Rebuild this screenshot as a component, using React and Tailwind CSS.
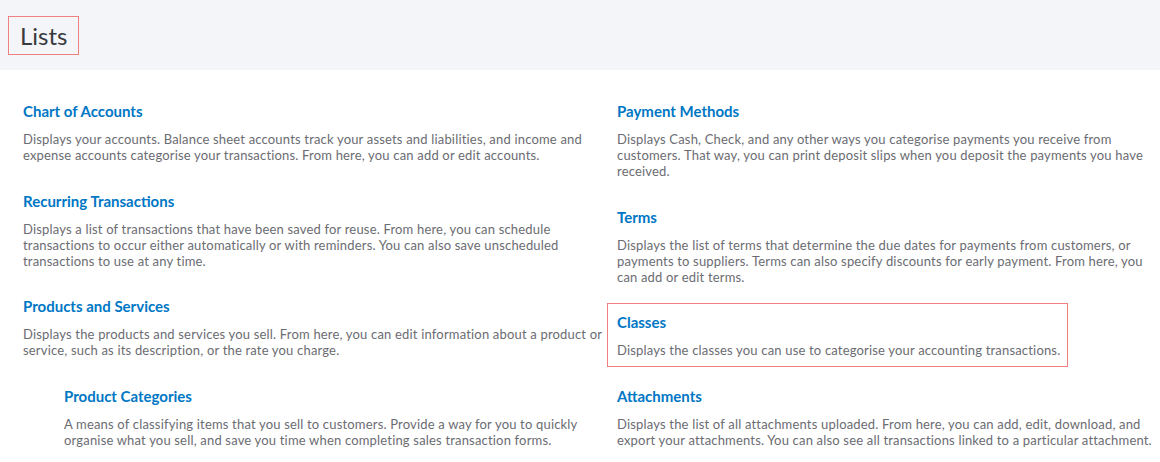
import React from "react";

const leftItems = [
  {
    title: "Chart of Accounts",
    lines: [
      "Displays your accounts. Balance sheet accounts track your assets and liabilities, and income and",
      "expense accounts categorise your transactions. From here, you can add or edit accounts.",
    ],
  },
  {
    title: "Recurring Transactions",
    lines: [
      "Displays a list of transactions that have been saved for reuse. From here, you can schedule",
      "transactions to occur either automatically or with reminders. You can also save unscheduled",
      "transactions to use at any time.",
    ],
  },
  {
    title: "Products and Services",
    lines: [
      "Displays the products and services you sell. From here, you can edit information about a product or",
      "service, such as its description, or the rate you charge.",
    ],
  },
  {
    title: "Product Categories",
    indent: true,
    lines: [
      "A means of classifying items that you sell to customers. Provide a way for you to quickly",
      "organise what you sell, and save you time when completing sales transaction forms.",
    ],
  },
];

const rightItems = [
  {
    title: "Payment Methods",
    lines: [
      "Displays Cash, Check, and any other ways you categorise payments you receive from",
      "customers. That way, you can print deposit slips when you deposit the payments you have",
      "received.",
    ],
  },
  {
    title: "Terms",
    lines: [
      "Displays the list of terms that determine the due dates for payments from customers, or",
      "payments to suppliers. Terms can also specify discounts for early payment. From here, you",
      "can add or edit terms.",
    ],
  },
  {
    title: "Classes",
    boxed: true,
    lines: ["Displays the classes you can use to categorise your accounting transactions."],
  },
  {
    title: "Attachments",
    lines: [
      "Displays the list of all attachments uploaded. From here, you can add, edit, download, and",
      "export your attachments. You can also see all transactions linked to a particular attachment.",
    ],
  },
];

const ListItem = ({ item }) => (
  <div>
    <a href="#" className="block text-[15px] leading-[20px] font-bold text-[#0077c5]">
      {item.title}
    </a>
    <p className="mt-[10px] text-[13px] leading-[16px] tracking-[0.18px] text-[#6b6c72]">
      {item.lines.map((line) => (
        <span key={line} className="block whitespace-nowrap">
          {line}
        </span>
      ))}
    </p>
  </div>
);

const App = () => {
  return (
    <div className="w-[1160px] h-[462px] overflow-hidden bg-white font-['Lato',sans-serif]">
      <div className="h-[70px] bg-[#f4f5f8] pt-[16px] pl-[8px]">
        <div className="flex h-[39px] w-[71px] items-center border border-[#f08080] pl-[11px] text-[24px] text-[#393a3d]">
          Lists
        </div>
      </div>

      <div className="flex pt-[31px]">
        {/* left column */}
        <div className="flex w-[607px] flex-col gap-[27.5px] pl-[23px]">
          {leftItems.map((item) => (
            <div key={item.title} className={item.indent ? "ml-[41px]" : ""}>
              <ListItem item={item} />
            </div>
          ))}
        </div>

        {/* right column */}
        <div className="flex flex-col">
          {rightItems.map((item, i) => {
            if (item.boxed)
              return (
                <div
                  key={item.title}
                  className="mt-[18.5px] w-[461px] border border-[#f08080] px-[9px] py-[8px]"
                >
                  <ListItem item={item} />
                </div>
              );
            const prevBoxed = i > 0 && rightItems[i - 1].boxed;
            return (
              <div
                key={item.title}
                className={
                  i === 0 ? "pl-[10px]" : prevBoxed ? "mt-[18.5px] pl-[10px]" : "mt-[27.5px] pl-[10px]"
                }
              >
                <ListItem item={item} />
              </div>
            );
          })}
        </div>
      </div>
    </div>
  );
};

export default App;
